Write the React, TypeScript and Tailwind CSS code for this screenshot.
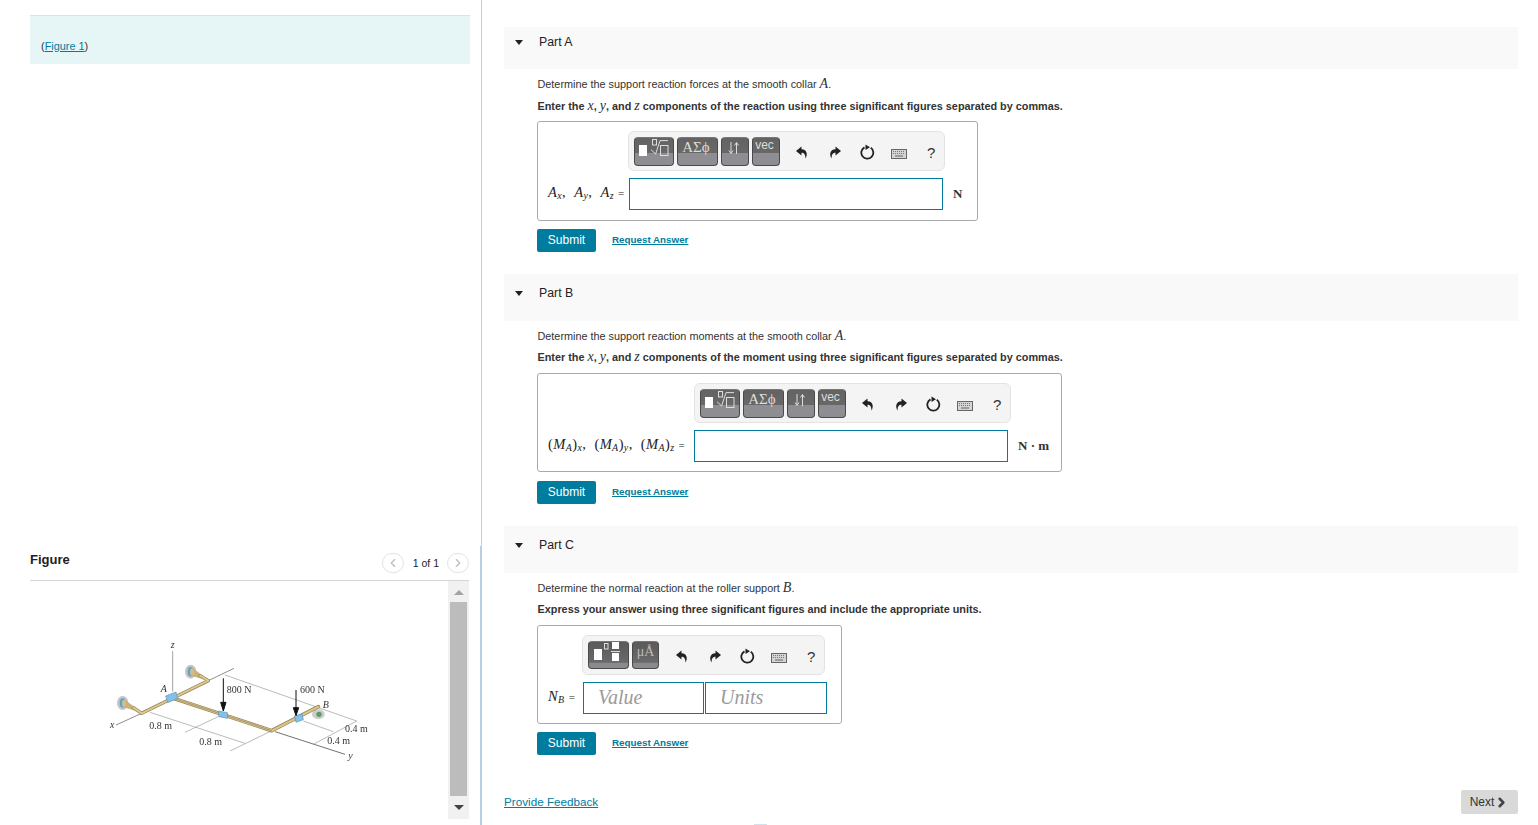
import { ChevronLeft, ChevronRight } from "lucide-react";

const sans = "font-['Liberation_Sans',Arial,sans-serif]";
const serif = "font-['Liberation_Serif','Times_New_Roman',serif]";

function ToolBtn({ w, soft, children }: { w: string; soft?: boolean; children: React.ReactNode }) {
  return (
    <div className={`${w} ${soft ? "h-[28px] bg-[linear-gradient(#5a5a5a_0,#6a6a6a_78%,#8a8a8e_82%,#8a8a8e_100%)]" : "h-[29px] bg-[linear-gradient(#636363_0,#686868_57%,#8d8d92_57%,#8d8d92_100%)]"} rounded-[4px] border border-[#4a4a4a] border-t-[#777] text-[#ddd] overflow-hidden flex items-start justify-center`}>
      {children}
    </div>
  );
}

function TemplateIcon() {
  return (
    <svg width="36" height="27" viewBox="0 0 36 27" fill="none">
      <rect x="3" y="7" width="8" height="11" fill="#fff" />
      <rect x="16.500" y="1.500" width="4" height="5.500" stroke="#ddd" />
      <path d="M15 11.700L19.600 16 24 2.600H32" stroke="#ddd" strokeWidth="1" />
      <rect x="24.500" y="7.500" width="7.500" height="10" stroke="#ddd" />
    </svg>
  );
}

function FractionIcon() {
  return (
    <svg width="39" height="27" viewBox="0 0 39 27" fill="none">
      <rect x="5" y="7" width="8" height="11" fill="#fff" />
      <rect x="15.500" y="1.500" width="3.500" height="5.500" stroke="#ddd" />
      <rect x="23" y="0" width="7" height="7" fill="#fff" />
      <rect x="22" y="9" width="9" height="1" fill="#ddd" />
      <rect x="23" y="11" width="7" height="8" fill="#fff" />
    </svg>
  );
}

function ArrowsIcon() {
  return (
    <svg width="14" height="16" viewBox="0 0 14 16" fill="none" stroke="#ddd" strokeWidth="1" className="mt-[2px] mr-[3px]">
      <path d="M4 2v11M2 10.500L4 13.500 6 10.500M9.500 14V3M7.500 5.500L9.500 2.500 11.500 5.500" />
    </svg>
  );
}

function UndoIcon({ flip }: { flip?: boolean }) {
  return (
    <svg width="12" height="13" viewBox="0 0 12 13" fill="#222" className={flip ? "-scale-x-100" : ""}>
      <path d="M5.500 0.500L0 5l5.500 4.500V6.700c2.600 0 3.800 1.500 4 5.800 2-3.500 2.200-9-4-9.300z" />
    </svg>
  );
}

function ResetIcon() {
  return (
    <svg width="15" height="16" viewBox="0 0 15 16" fill="none">
      <path d="M10.800 3.800A6 6 0 1 1 4.500 3.400" stroke="#222" strokeWidth="1.800" />
      <path d="M5.500 0.500L10 3.300 5.500 6z" fill="#222" />
    </svg>
  );
}

function KeyboardIcon() {
  return (
    <svg width="16" height="10" viewBox="0 0 16 10">
      <rect x="0.500" y="0.500" width="15" height="9" fill="#d4d4d4" stroke="#666" />
      <path d="M2 2.500h12M2 4.500h12" stroke="#777" strokeWidth="1" strokeDasharray="1 1" />
      <path d="M4 7h8" stroke="#777" strokeWidth="1.200" />
    </svg>
  );
}

function ToolIcons() {
  return (
    <div className="flex items-center mt-[2px]">
      <UndoIcon />
      <div className="ml-[21px]"><UndoIcon flip /></div>
      <div className="ml-[19px] -mt-[1px]"><ResetIcon /></div>
      <div className="ml-[16px] mt-[3px]"><KeyboardIcon /></div>
      <span className={`${sans} ml-[20px] text-[15px] leading-none text-[#333] w-[8px] text-center`}>?</span>
    </div>
  );
}

function Toolbar({ small, flush }: { small?: boolean; flush?: boolean }) {
  return (
    <div className={`${flush ? "" : "-ml-[1px]"} h-[40px] rounded-[6px] border border-[#e3e3e3] bg-[#f4f4f4] flex items-center pl-[5px] ${small ? "w-[243px]" : "w-[317px]"}`}>
      {small ? (
        <div className="flex gap-[3px]">
          <ToolBtn soft w="w-[41px]"><FractionIcon /></ToolBtn>
          <ToolBtn soft w="w-[27px]"><span className={`${serif} text-[14px] leading-[20px] text-[#bbb]`}>μÅ</span></ToolBtn>
        </div>
      ) : (
        <div className="flex gap-[3px]">
          <ToolBtn w="w-[40px]"><TemplateIcon /></ToolBtn>
          <ToolBtn w="w-[41px]"><span className={`${serif} text-[15px] leading-[19px] pr-[3px]`}>ΑΣϕ</span></ToolBtn>
          <ToolBtn w="w-[28px]"><ArrowsIcon /></ToolBtn>
          <ToolBtn w="w-[28px]"><span className={`${sans} text-[12px] leading-[14px] pr-[3px]`}>vec</span></ToolBtn>
        </div>
      )}
      <div className={small ? "ml-[17px]" : "ml-[16px]"}>
        <ToolIcons />
      </div>
    </div>
  );
}

function Sub({ children }: { children: React.ReactNode }) {
  return <sub className="text-[10px] italic bottom-[-2px] leading-none">{children}</sub>;
}

function M({ children }: { children: React.ReactNode }) {
  return <i className={`${serif} italic text-[14px] font-normal leading-none`}>{children}</i>;
}

function L({ children }: { children: React.ReactNode }) {
  return <i className={`${serif} italic`}>{children}</i>;
}

function SubmitRow({ top }: { top: string }) {
  return (
    <div className={`flex items-center ${top} h-[23px]`}>
      <button className={`${sans} w-[59px] h-[23px] pb-[1px] rounded-[2px] bg-[#007c9e] text-white text-[12px]`}>Submit</button>
      <a className={`${sans} ml-[16px] text-[9.800px] font-bold text-[#007c9e] underline`}>Request Answer</a>
    </div>
  );
}

function PartHeader({ title, h, pt }: { title: string; h: string; pt: string }) {
  return (
    <div className={`${h} ${pt} bg-[#f9f9f9] flex items-start pl-[11px]`}>
      <span className="mt-[5px] w-0 h-0 border-x-[4.500px] border-x-transparent border-t-[5px] border-t-[#222]" />
      <span className={`${sans} ml-[16px] text-[12.300px] leading-[14px] text-[#222]`}>{title}</span>
    </div>
  );
}

function Prompt({ line1, line2, gap }: { line1: React.ReactNode; line2: React.ReactNode; gap: string }) {
  return (
    <div className={`${sans} pl-[33.500px] pt-[8px]`}>
      <p className="text-[10.850px] leading-[14px] text-[#333]">{line1}</p>
      <p className={`${gap} text-[10.850px] leading-[14px] font-bold text-[#333]`}>{line2}</p>
    </div>
  );
}

function Answer({ label, unit, w, h, labelW, small, flush, top }: { label: React.ReactNode; unit?: React.ReactNode; w: string; h: string; labelW: string; small?: boolean; flush?: boolean; top: string }) {
  return (
    <div className={`${w} ${h} ${top} rounded-[3px] border border-[#aaa] pl-[10px] pt-[9px]`}>
      <div className="flex">
        <div className={labelW} />
        <Toolbar small={small} flush={flush} />
      </div>
      <div className="flex items-center mt-[7px]">
        <div className={`${labelW} ${serif} text-[14.500px] tracking-[0.400px] text-[#222] whitespace-nowrap -mt-[2px]`}>{label}</div>
        {small ? (
          <div className="flex gap-[1px]">
            <div className={`${serif} w-[121px] h-[32px] border border-[#007c9e] pl-[14px] text-[20px] leading-[29px] italic text-[#9a9a9a]`}>Value</div>
            <div className={`${serif} w-[122px] h-[32px] border border-[#007c9e] pl-[14px] text-[20px] leading-[29px] italic text-[#9a9a9a]`}>Units</div>
          </div>
        ) : (
          <>
            <div className="w-[314px] h-[32px] border border-[#007c9e]" />
            <div className={`${serif} ml-[10px] text-[13px] font-bold text-[#333] whitespace-nowrap`}>{unit}</div>
          </>
        )}
      </div>
    </div>
  );
}

function Flange({ x, y, tx, ty }: { x: number; y: number; tx: number; ty: number }) {
  return (
    <g>
      <ellipse cx={x} cy={y} rx="17" ry="21" fill="#c4c4c4" />
      <path d={`M${x + 2} ${y - 13}L${tx} ${ty - 5}L${tx} ${ty + 5}L${x + 4} ${y + 13}z`} fill="#c9b27a" />
      <ellipse cx={x} cy={y} rx="9" ry="14" fill="#5da3d0" />
      <ellipse cx={x + 4} cy={y + 1} rx="6" ry="11" fill="#d4bd85" />
    </g>
  );
}

function PipeDiagram() {
  // coords are the 3x zoom of the figure
  return (
    <svg width="280" height="130" viewBox="0 0 840 390" className="block blur-[0.5px]">
      <g fill="none" stroke="#777" strokeWidth="2">
        <path d="M218 48V170" />
        <path d="M48 270L125 235M325 137L402 100" stroke="#555" />
        <path d="M375 120L770 258" stroke="#999" />
        <path d="M150 232L435 325M255 292L365 240M390 348L510 290" stroke="#999" />
        <path d="M525 290L735 358" stroke="#555" strokeWidth="2.500" />
        <path d="M610 258L700 290M640 328L770 258" stroke="#999" />
      </g>
      <Flange x={68} y={204} tx={105} ty={222} />
      <Flange x={272} y={110} tx={310} ty={128} />
      <ellipse cx="655" cy="238" rx="19" ry="15" fill="#ccc" />
      <circle cx="657" cy="238" r="8" fill="#5b9c62" />
      <g fill="none" strokeLinecap="round" strokeLinejoin="round">
        <path d="M100 218L125 235L325 137L300 122" stroke="#8f7f50" strokeWidth="10" />
        <path d="M100 218L125 235L325 137L300 122" stroke="#dcc992" strokeWidth="6" />
        <path d="M215 188L515 287L655 215" stroke="#8f7f50" strokeWidth="11" />
        <path d="M215 188L515 287L655 215" stroke="#d8c48c" strokeWidth="7" />
        <path d="M215 188L515 287" stroke="#7d6f48" strokeWidth="1.500" />
      </g>
      <g fill="#84c0e8" stroke="#5a94b8" strokeWidth="2">
        <path d="M197 183L228 171L233 190L203 203z" />
        <path d="M355 228L382 233L383 250L357 245z" />
        <path d="M583 243L606 237L610 254L588 262z" />
      </g>
      <g stroke="#111" strokeWidth="3" fill="#111">
        <path d="M370 130V205" />
        <path d="M362 202L370 228L378 202z" />
        <path d="M588 165V220" />
        <path d="M580 218L588 242L596 218z" />
      </g>
      <g fontFamily="'Liberation Serif', serif" fontSize="30" fill="#333">
        <text x="380" y="175">800 N</text>
        <text x="600" y="175">600 N</text>
        <text x="148" y="282">0.8 m</text>
        <text x="298" y="330">0.8 m</text>
        <text x="735" y="292">0.4 m</text>
        <text x="682" y="326">0.4 m</text>
        <g fontStyle="italic">
          <text x="212" y="38">z</text>
          <text x="182" y="170">A</text>
          <text x="668" y="218">B</text>
          <text x="30" y="278">x</text>
          <text x="745" y="372">y</text>
        </g>
      </g>
    </svg>
  );
}

export default function App() {
  return (
    <div className={`${sans} relative w-[1538px] h-[825px] overflow-hidden bg-white flex`}>
      {/* left panel */}
      <div className="relative w-[482px] h-full border-r border-[#c5cdd3] pl-[30px] pr-[11px] pt-[15px] flex flex-col">
        <div className="absolute right-[-1px] top-[546px] bottom-0 w-[2px] bg-[#b9cfe3]" />
        <div className="h-[49px] border-t border-[#d9e3e3] bg-[#e6f6f7] pl-[11px] pt-[23px] text-[10.900px] leading-[14px] text-[#333]">
          (<a className="text-[#007c9e] underline">Figure 1</a>)
        </div>
        <div className="mt-[482px] h-[35px] w-[439px] border-b border-[#d5d5d5] flex items-start justify-between">
          <span className="text-[13px] leading-[22px] font-bold text-[#222] mt-[3px]">Figure</span>
          <div className="flex items-center mt-[7px]">
            <span className="w-[22px] h-[20px] rounded-full border border-[#e3e3e3] flex items-center justify-center">
              <ChevronLeft size={14} className="text-[#bbb]" />
            </span>
            <span className="ml-[9px] mr-[8px] text-[10.500px] text-[#222] mt-[2px]">1 of 1</span>
            <span className="w-[22px] h-[20px] rounded-full border border-[#e3e3e3] flex items-center justify-center">
              <ChevronRight size={14} className="text-[#bbb]" />
            </span>
          </div>
        </div>
        <div className="flex h-[238px]">
          <div className="w-[418px] pt-[54px] pl-[70px]"><PipeDiagram /></div>
          <div className="w-[21px] h-full bg-[#f1f1f1] flex flex-col items-center pt-[9px]">
            <span className="w-0 h-0 border-x-[5px] border-x-transparent border-b-[5px] border-b-[#a3a3a3]" />
            <span className="mt-[7px] w-[17px] h-[194px] bg-[#bcbcbc]" />
            <span className="mt-[9px] w-0 h-0 border-x-[5px] border-x-transparent border-t-[5px] border-t-[#444]" />
          </div>
        </div>
      </div>

      {/* right panel */}
      <div className="w-[1036px] pl-[22px] pt-[27px]">
        <PartHeader title="Part A" h="h-[42px]" pt="pt-[8px]" />
        <Prompt
          gap="mt-[8px]"
          line1={<>Determine the support reaction forces at the smooth collar <M>A</M>.</>}
          line2={<>Enter the <M>x</M>, <M>y</M>, and <M>z</M> components of the reaction using three significant figures separated by commas.</>}
        />
        <div className="pl-[33px]">
          <Answer
            top="mt-[8px]" w="w-[441px]" h="h-[100px]" labelW="w-[81px]"
            label={<><L>A</L><Sub>x</Sub>, &nbsp;<L>A</L><Sub>y</Sub>, &nbsp;<L>A</L><Sub>z</Sub> <span className="text-[11px]">=</span></>}
            unit="N"
          />
          <SubmitRow top="mt-[8px]" />
        </div>

        <div className="mt-[22px]"><PartHeader title="Part B" h="h-[47px]" pt="pt-[12px]" /></div>
        <Prompt
          gap="mt-[7px]"
          line1={<>Determine the support reaction moments at the smooth collar <M>A</M>.</>}
          line2={<>Enter the <M>x</M>, <M>y</M>, and <M>z</M> components of the moment using three significant figures separated by commas.</>}
        />
        <div className="pl-[33px]">
          <Answer
            top="mt-[9px]" w="w-[525px]" h="h-[99px]" labelW="w-[146px]" flush
            label={<>(<L>M</L><Sub>A</Sub>)<Sub>x</Sub>, &nbsp;(<L>M</L><Sub>A</Sub>)<Sub>y</Sub>, &nbsp;(<L>M</L><Sub>A</Sub>)<Sub>z</Sub> <span className="text-[11px]">=</span></>}
            unit="N · m"
          />
          <SubmitRow top="mt-[9px]" />
        </div>

        <div className="mt-[22px]"><PartHeader title="Part C" h="h-[47px]" pt="pt-[12px]" /></div>
        <Prompt
          gap="mt-[7px]"
          line1={<>Determine the normal reaction at the roller support <M>B</M>.</>}
          line2="Express your answer using three significant figures and include the appropriate units."
        />
        <div className="pl-[33px]">
          <Answer
            top="mt-[9px]" w="w-[305px]" h="h-[99px]" labelW="w-[35px]" small
            label={<><L>N</L><Sub>B</Sub> <span className="text-[11px]">=</span></>}
          />
          <SubmitRow top="mt-[8px]" />
        </div>

        <div className="mt-[35px] flex items-center justify-between w-[1014px]">
          <a className="text-[11.700px] text-[#007c9e] underline">Provide Feedback</a>
          <button className="w-[57px] h-[24px] rounded-[2px] bg-[#d9d9d9] text-[12px] text-[#333] flex items-center justify-center">
            Next<ChevronRight size={15} strokeWidth={4} className="text-[#444]" />
          </button>
        </div>
      </div>

      <div className="absolute bottom-0 left-[754px] w-[13px] h-[1px] bg-[#cfe3ee]" />
    </div>
  );
}
